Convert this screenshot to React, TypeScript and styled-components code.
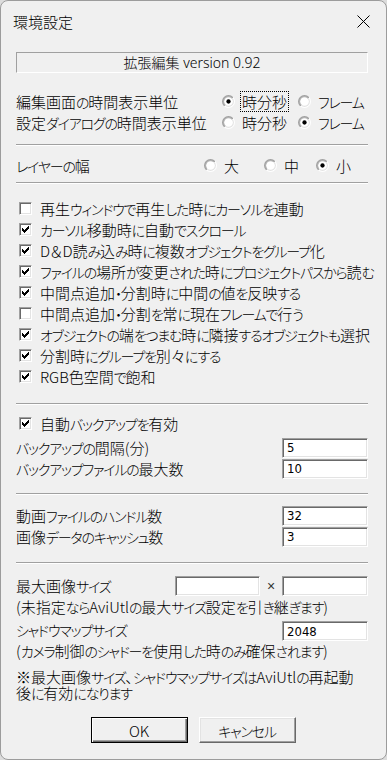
import React, { useId } from "react";
import styled, { createGlobalStyle, css } from "styled-components";

const GlobalStyle = createGlobalStyle`
  html, body {
    margin: 0;
    padding: 0;
    background: #dcdcdc;
  }
  body {
    font-family: "Noto Sans CJK JP", "Noto Sans", sans-serif;
    font-feature-settings: "palt";
    font-weight: 300;
    color: #000;
  }
  * { box-sizing: border-box; }
`;

const Window = styled.div`
  width: 387px;
  height: 760px;
  border: 1px solid #9c9c9c;
  border-radius: 8px;
  background: #f0f0f0;
  display: flex;
  flex-direction: column;
  overflow: hidden;
`;

const TitleBar = styled.div`
  height: 41px;
  display: flex;
  align-items: center;
  justify-content: space-between;
  padding: 0 16px 0 12px;
  font-size: 15px;
`;

const TitleText = styled.span`
  line-height: 1;
  font-feature-settings: normal;
`;

const Body = styled.div`
  padding: 0 18px 0 15px;
  display: flex;
  flex-direction: column;
  font-size: 15px;
  white-space: nowrap;
`;

const Kana = styled.span`
  font-size: 14px;
  letter-spacing: -1.2px;
`;

const VersionBox = styled.div`
  margin-top: 10px;
  height: 21px;
  border-top: 1px solid #a0a0a0;
  border-left: 1px solid #a0a0a0;
  border-bottom: 1px solid #ffffff;
  border-right: 1px solid #ffffff;
  display: flex;
  align-items: center;
  justify-content: center;
  font-family: "Noto Sans", "Noto Sans CJK JP", sans-serif;
  font-size: 14px;
  line-height: 1;
`;

const Section = styled.div<{ $mt: number }>`
  margin-top: ${(p) => p.$mt}px;
  display: flex;
  flex-direction: column;
`;

const UnitRow = styled.div`
  height: 21px;
  display: grid;
  grid-template-columns: 206px 76px auto;
  align-items: center;
`;

const LayerRow = styled.div<{ $mt: number }>`
  margin-top: ${(p) => p.$mt}px;
  height: 21px;
  display: grid;
  grid-template-columns: 188px 60px 52px auto;
  align-items: center;
`;

const Label = styled.span`
  line-height: 1;
  align-self: center;
`;

const OptionLabel = styled.span<{ $focus?: boolean }>`
  line-height: 1;
  padding: 2px 1px;
  margin: 0 -1px;
  border: 1px solid transparent;
  ${(p) =>
    p.$focus &&
    css`
      border: 1px dotted #000;
    `}
`;

const Option = styled.span`
  display: inline-flex;
  align-items: center;
  gap: 6px;
`;

const RadioSvg = styled.svg`
  flex: none;
`;

const Separator = styled.div<{ $mt: number }>`
  margin-top: ${(p) => p.$mt}px;
  height: 2px;
  border-top: 1px solid #a0a0a0;
  border-bottom: 1px solid #ffffff;
`;

const CheckRow = styled.div`
  height: 21px;
  display: flex;
  align-items: center;
  gap: 8px;
  padding-left: 3px;
`;

const Box = styled.span`
  width: 13px;
  height: 13px;
  flex: none;
  background: #fff;
  border-top: 1px solid #a0a0a0;
  border-left: 1px solid #a0a0a0;
  border-bottom: 1px solid #ffffff;
  border-right: 1px solid #ffffff;
  box-shadow: inset 1px 1px 0 #696969, inset -1px -1px 0 #e3e3e3;
  display: block;
  position: relative;
`;

const CheckSvg = styled.svg`
  position: absolute;
  left: -1px;
  top: -1px;
`;

const FieldGroup = styled.div<{ $mt?: number }>`
  margin-top: ${(p) => p.$mt ?? 0}px;
  display: flex;
  flex-direction: column;
`;

const FieldRow = styled.div<{ $h?: number; $bottom?: boolean }>`
  height: ${(p) => p.$h ?? 21}px;
  display: flex;
  align-items: ${(p) => (p.$bottom ? "flex-end" : "center")};
  justify-content: space-between;
`;

const Field = styled.div<{ $w?: number }>`
  width: ${(p) => p.$w ?? 86}px;
  height: 20px;
  flex: none;
  background: #fff;
  border-top: 1px solid #a0a0a0;
  border-left: 1px solid #a0a0a0;
  border-bottom: 1px solid #ffffff;
  border-right: 1px solid #ffffff;
  box-shadow: inset 1px 1px 0 #696969, inset -1px -1px 0 #e3e3e3;
  display: flex;
  align-items: center;
  padding-left: 4px;
  font-family: "Liberation Sans Narrow", "DejaVu Sans Condensed", "Liberation Sans", sans-serif;
  font-weight: 400;
  font-size: 13px;
  line-height: 1;
`;

const SizeRow = styled.div`
  height: 21px;
  display: grid;
  grid-template-columns: 159px 85px 22px 86px;
  align-items: center;
`;

const Times = styled.span`
  text-align: center;
  font-family: "Liberation Sans", sans-serif;
  font-size: 14px;
  color: #333;
  line-height: 1;
`;

const NoteLine = styled.div<{ $h?: number }>`
  height: ${(p) => p.$h ?? 21}px;
  display: flex;
  align-items: center;
  line-height: 1;
`;

const Notice = styled.div<{ $mt: number }>`
  margin-top: ${(p) => p.$mt}px;
  line-height: 16px;
`;

const ButtonRow = styled.div<{ $mt: number }>`
  margin-top: ${(p) => p.$mt}px;
  display: flex;
  justify-content: center;
  gap: 11px;
  padding-left: 2px;
`;

const Button = styled.button<{ $default?: boolean }>`
  width: 97px;
  height: 26px;
  background: #f0f0f0;
  font-family: "Noto Sans CJK JP", "Noto Sans", sans-serif;
  font-feature-settings: "palt";
  font-weight: 300;
  font-size: 15px;
  line-height: 1;
  color: #000;
  padding: 0;
  border-top: 1px solid #ffffff;
  border-left: 1px solid #ffffff;
  border-bottom: 1px solid #696969;
  border-right: 1px solid #696969;
  box-shadow: inset -1px -1px 0 #a0a0a0, inset 1px 1px 0 #e3e3e3;
  ${(p) =>
    p.$default &&
    css`
      border: 1px solid #000;
      box-shadow: inset 1px 1px 0 #ffffff, inset -1px -1px 0 #696969,
        inset -2px -2px 0 #a0a0a0;
    `}
`;

function Jp({ children }: { children: string }) {
  const parts = children.split(/([\u3040-\u30FF]+)/);
  return (
    <>
      {parts.map((p, i) => (i % 2 ? <Kana key={i}>{p}</Kana> : p))}
    </>
  );
}

function Radio({ checked }: { checked?: boolean }) {
  const id = useId().replace(/:/g, "");
  return (
    <RadioSvg width="13" height="13" viewBox="0 0 12 12">
      <defs>
        <linearGradient id={`o${id}`} x1="0" y1="0" x2="1" y2="1">
          <stop offset="0.5" stopColor="#a0a0a0" />
          <stop offset="0.5" stopColor="#ffffff" />
        </linearGradient>
        <linearGradient id={`i${id}`} x1="0" y1="0" x2="1" y2="1">
          <stop offset="0.5" stopColor="#b4b4b4" />
          <stop offset="0.5" stopColor="#e3e3e3" />
        </linearGradient>
      </defs>
      <circle cx="6" cy="6" r="6" fill={`url(#o${id})`} />
      <circle cx="6" cy="6" r="5" fill={`url(#i${id})`} />
      <circle cx="6" cy="6" r="4" fill="#ffffff" />
      {checked && <circle cx="6" cy="6" r="2" fill="#000" />}
    </RadioSvg>
  );
}

function Check({ checked }: { checked?: boolean }) {
  const cols = [
    [3, 5],
    [4, 6],
    [5, 7],
    [6, 6],
    [7, 5],
    [8, 4],
    [9, 3],
  ];
  return (
    <Box>
      {checked && (
        <CheckSvg width="13" height="13" viewBox="0 0 13 13" shapeRendering="crispEdges">
          {cols.map(([x, y]) => (
            <rect key={x} x={x} y={y} width="1" height="3" fill="#000" />
          ))}
        </CheckSvg>
      )}
    </Box>
  );
}

function CloseIcon() {
  return (
    <svg width="13" height="13" viewBox="0 0 13 13">
      <path d="M0.5 0.5 L12.5 12.5 M12.5 0.5 L0.5 12.5" stroke="#000" strokeWidth="1" />
    </svg>
  );
}

const checks: [string, boolean][] = [
  ["再生ウィンドウで再生した時にカーソルを連動", false],
  ["カーソル移動時に自動でスクロール", true],
  ["D＆D読み込み時に複数オブジェクトをグループ化", true],
  ["ファイルの場所が変更された時にプロジェクトパスから読む", true],
  ["中間点追加・分割時に中間の値を反映する", true],
  ["中間点追加・分割を常に現在フレームで行う", false],
  ["オブジェクトの端をつまむ時に隣接するオブジェクトも選択", true],
  ["分割時にグループを別々にする", true],
  ["RGB色空間で飽和", true],
];

export default function App() {
  return (
    <>
      <GlobalStyle />
      <Window>
        <TitleBar>
          <TitleText>環境設定</TitleText>
          <CloseIcon />
        </TitleBar>
        <Body>
          <VersionBox>拡張編集 version 0.92</VersionBox>

          <Section $mt={18}>
            <UnitRow>
              <Label><Jp>編集画面の時間表示単位</Jp></Label>
              <Option>
                <Radio checked />
                <OptionLabel $focus>時分秒</OptionLabel>
              </Option>
              <Option>
                <Radio />
                <OptionLabel><Jp>フレーム</Jp></OptionLabel>
              </Option>
            </UnitRow>
            <UnitRow>
              <Label><Jp>設定ダイアログの時間表示単位</Jp></Label>
              <Option>
                <Radio />
                <OptionLabel>時分秒</OptionLabel>
              </Option>
              <Option>
                <Radio checked />
                <OptionLabel><Jp>フレーム</Jp></OptionLabel>
              </Option>
            </UnitRow>
          </Section>

          <Separator $mt={11} />

          <LayerRow $mt={9}>
            <Label><Jp>レイヤーの幅</Jp></Label>
            <Option>
              <Radio />
              <OptionLabel>大</OptionLabel>
            </Option>
            <Option>
              <Radio />
              <OptionLabel>中</OptionLabel>
            </Option>
            <Option>
              <Radio checked />
              <OptionLabel>小</OptionLabel>
            </Option>
          </LayerRow>

          <Separator $mt={6} />

          <Section $mt={14}>
            {checks.map(([t, c]) => (
              <CheckRow key={t}>
                <Check checked={c} />
                <Label><Jp>{t}</Jp></Label>
              </CheckRow>
            ))}
          </Section>

          <Separator $mt={16} />

          <Section $mt={8}>
            <CheckRow>
              <Check checked />
              <Label><Jp>自動バックアップを有効</Jp></Label>
            </CheckRow>
            <FieldGroup $mt={3}>
              <FieldRow>
                <Label><Jp>バックアップの間隔(分)</Jp></Label>
                <Field>5</Field>
              </FieldRow>
              <FieldRow>
                <Label><Jp>バックアップファイルの最大数</Jp></Label>
                <Field>10</Field>
              </FieldRow>
            </FieldGroup>
          </Section>

          <Separator $mt={14} />

          <Section $mt={10}>
            <FieldRow>
              <Label><Jp>動画ファイルのハンドル数</Jp></Label>
              <Field>32</Field>
            </FieldRow>
            <FieldRow>
              <Label><Jp>画像データのキャッシュ数</Jp></Label>
              <Field>3</Field>
            </FieldRow>
          </Section>

          <Separator $mt={15} />

          <Section $mt={11}>
            <SizeRow>
              <Label><Jp>最大画像サイズ</Jp></Label>
              <Field $w={85} />
              <Times>×</Times>
              <Field />
            </SizeRow>
            <NoteLine><Jp>(未指定ならAviUtlの最大サイズ設定を引き継ぎます)</Jp></NoteLine>
            <FieldRow $h={24} $bottom>
              <Label><Jp>シャドウマップサイズ</Jp></Label>
              <Field>2048</Field>
            </FieldRow>
            <NoteLine $h={19}><Jp>(カメラ制御のシャドーを使用した時のみ確保されます)</Jp></NoteLine>
          </Section>

          <Notice $mt={9}>
            <Jp>※最大画像サイズ、シャドウマップサイズはAviUtlの再起動</Jp>
            <br />
            <Jp>後に有効になります</Jp>
          </Notice>

          <ButtonRow $mt={16}>
            <Button $default>OK</Button>
            <Button><Jp>キャンセル</Jp></Button>
          </ButtonRow>
        </Body>
      </Window>
    </>
  );
}
